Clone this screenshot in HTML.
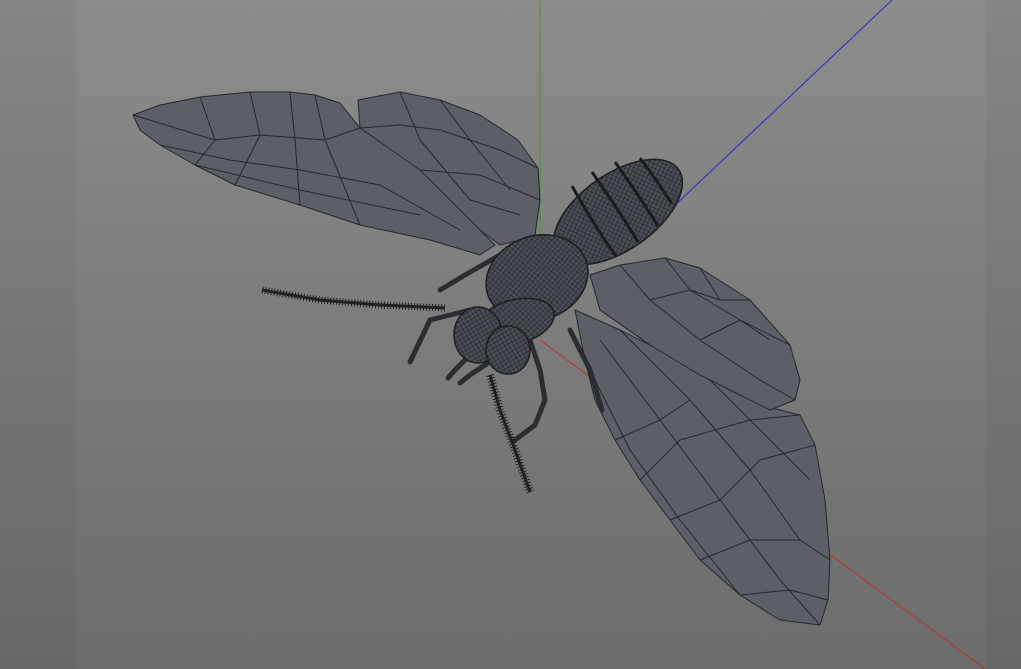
<!DOCTYPE html>
<html><head><meta charset="utf-8"><style>
html,body{margin:0;padding:0;width:1021px;height:669px;overflow:hidden;}
</style></head><body>
<svg width="1021" height="669" viewBox="0 0 1021 669" xmlns="http://www.w3.org/2000/svg">
<defs>
<linearGradient id="bg" x1="0" y1="0" x2="0" y2="1">
<stop offset="0" stop-color="#8c8c8c"/><stop offset="1" stop-color="#6c6c6c"/>
</linearGradient>
<linearGradient id="side" x1="0" y1="0" x2="0" y2="1">
<stop offset="0" stop-color="#868686"/><stop offset="1" stop-color="#676767"/>
</linearGradient>
<pattern id="mesh" width="4" height="4" patternUnits="userSpaceOnUse" patternTransform="rotate(-30)">
<rect width="4" height="4" fill="#4a4d53"/>
<path d="M0 0H4M0 0V4" stroke="#1e2024" stroke-width="0.9"/>
</pattern>
</defs>
<rect width="1021" height="669" fill="url(#bg)"/>
<rect x="0" width="76" height="669" fill="url(#side)"/>
<rect x="985" width="36" height="669" fill="url(#side)"/>

<line x1="540" y1="0" x2="540" y2="268" stroke="#2fa02f" stroke-width="1"/>
<line x1="672" y1="208" x2="892" y2="0" stroke="#2a2ad0" stroke-width="1"/>
<line x1="540" y1="340" x2="985" y2="669" stroke="#c03030" stroke-width="1"/>

<g fill="#5c5f66" stroke="#25272b" stroke-width="1" stroke-linejoin="round">
<polygon points="360,128 358,100 400,92 440,100 480,115 518,140 538,168 540,200 535,235 520,240 500,245 440,200"/>
<path d="M400,92 L420,140 L470,200 M440,100 L470,140 L510,190 M360,128 L400,125 L440,130 L500,150 L538,168 M420,170 L480,175 L540,200 M470,200 L520,215" fill="none"/>
<polygon points="133,115 160,105 200,97 250,92 290,92 315,95 340,103 360,128 420,170 495,245 480,255 430,240 360,225 300,205 235,185 195,165 160,145 140,130"/>
<path d="M200,97 L215,140 L195,165 M250,92 L260,135 L235,185 M290,92 L295,140 L300,205 M315,95 L325,140 L360,225 M133,115 L215,140 L260,135 L325,140 L360,128 M160,145 L230,160 L300,170 L380,185 L460,230 M195,165 L300,190 L420,215" fill="none"/>
<polygon points="575,310 620,330 700,370 760,405 800,415 815,445 825,500 830,560 828,600 820,625 780,620 740,595 700,560 670,520 640,480 615,440 595,400 585,360"/>
<path d="M600,340 L660,420 L720,500 L780,580 L820,625 M620,330 L690,400 L750,470 L800,540 L830,560 M700,370 L750,420 L810,480 M585,360 L630,450 L680,520 L740,595 M640,480 L680,440 L750,420 L800,415 M670,520 L720,500 L760,460 L815,445 M700,560 L750,540 L800,540 M740,595 L790,590 L828,600 M615,440 L660,420 L690,400" fill="none"/>
<polygon points="590,275 620,265 665,258 700,268 750,300 790,345 800,380 795,400 770,410 740,395 700,375 650,345 600,310"/>
<path d="M620,265 L650,300 L700,340 L760,380 L795,400 M665,258 L690,290 L740,320 L790,345 M700,268 L720,300 M650,300 L690,290 L720,300 L750,300 M600,310 L650,345 M700,340 L740,320 L770,340" fill="none"/>
</g>

<g stroke="#2b2d31" stroke-width="5" fill="none" stroke-linecap="round">
<path d="M500,255 L465,275 L440,290"/>
<path d="M470,310 L430,320 L410,362"/>
<path d="M480,345 L455,370 L448,378"/>
<path d="M500,355 L470,375 L460,383"/>
<path d="M530,340 L540,370 L545,400 L535,425 L515,440"/>
<path d="M570,330 L590,370 L602,410"/>
</g>
<path d="M445,308 L380,305 L320,300 L262,290" stroke="#222" stroke-width="3" fill="none"/>
<path d="M445,308 L380,305 L320,300 L262,290" stroke="#222" stroke-width="7" stroke-dasharray="1 2" fill="none"/>
<path d="M490,375 L500,410 L515,450 L530,492" stroke="#222" stroke-width="3" fill="none"/>
<path d="M490,375 L500,410 L515,450 L530,492" stroke="#222" stroke-width="8" stroke-dasharray="1 2" fill="none"/>

<g stroke="#1c1e22" stroke-width="1.5">
<ellipse cx="618" cy="212" rx="74" ry="38" transform="rotate(-35 618 212)" fill="url(#mesh)"/>
<path d="M572,186 Q598,232 616,256 M592,172 Q622,215 638,242 M615,162 Q642,200 658,226 M640,158 Q660,185 672,204" fill="none" stroke="#1a1c20" stroke-width="3"/>
<ellipse cx="537" cy="278" rx="52" ry="42" transform="rotate(-20 537 278)" fill="url(#mesh)"/>
<ellipse cx="515" cy="322" rx="40" ry="22" transform="rotate(-15 515 322)" fill="url(#mesh)"/>
<ellipse cx="478" cy="335" rx="24" ry="28" fill="url(#mesh)"/>
<ellipse cx="508" cy="350" rx="22" ry="24" fill="url(#mesh)"/>
</g>
</svg>
</body></html>
